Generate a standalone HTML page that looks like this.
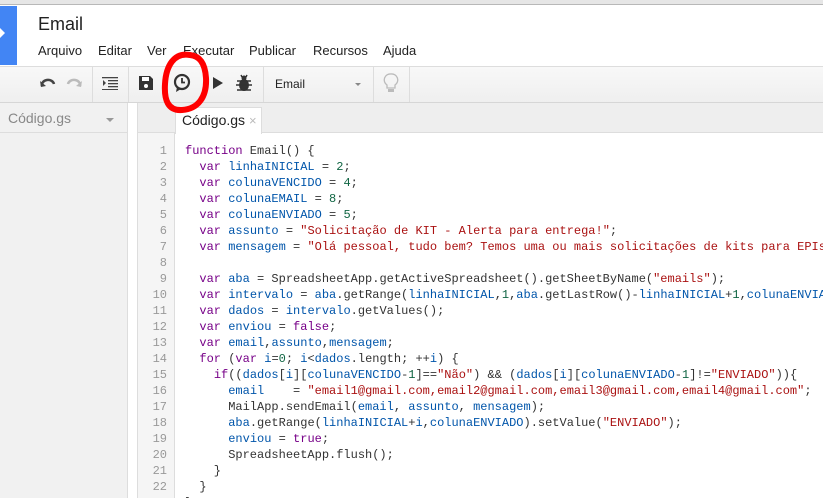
<!DOCTYPE html>
<html><head><meta charset="utf-8"><style>
*{margin:0;padding:0;box-sizing:border-box}
html,body{width:823px;height:498px;overflow:hidden}
body{background:#fff;font-family:"Liberation Sans",Arial,sans-serif;position:relative}
.a{position:absolute}
.code{font-family:"Liberation Mono",monospace;font-size:12px;line-height:16px;color:#333;white-space:pre}
.k{color:#708}.v{color:#05a}.n{color:#164}.s{color:#a11}
.ln{font-family:"Liberation Mono",monospace;font-size:12px;line-height:16px;color:#999;text-align:right;width:30px}
.sep{position:absolute;top:67px;width:1px;height:35px;background:#ddd}
.m{position:absolute;top:43px;font-size:13px;color:#222}
</style></head><body>
<div class="a" style="left:0;top:0;width:823px;height:5px;background:#e6e6e6;border-bottom:1px solid #b8b8b8"></div>
<div class="a" style="left:0;top:6px;width:17px;height:59px;background:#4285f4"></div>
<div class="a" style="left:0;top:28px;width:0;height:0;border-top:5px solid transparent;border-bottom:5px solid transparent;border-left:5px solid #fff"></div>
<div class="a" style="left:38px;top:14px;font-size:18px;color:#222">Email</div>
<div class="m" style="left:38px">Arquivo</div>
<div class="m" style="left:98px">Editar</div>
<div class="m" style="left:147px">Ver</div>
<div class="m" style="left:183px">Executar</div>
<div class="m" style="left:249px">Publicar</div>
<div class="m" style="left:313px">Recursos</div>
<div class="m" style="left:383px">Ajuda</div>
<!-- toolbar -->
<div class="a" style="left:0;top:66px;width:823px;height:37px;background:linear-gradient(#f8f8f8,#efefef);border-top:1px solid #ddd;border-bottom:1px solid #d6d6d6"></div>
<div class="sep" style="left:92px"></div><div class="sep" style="left:128px"></div><div class="sep" style="left:263px"></div><div class="sep" style="left:373px"></div><div class="sep" style="left:409px"></div>
<svg class="a" style="left:38px;top:74px" width="50" height="20" viewBox="0 0 50 20"><path d="M4 12 A6 5 0 0 1 16 10" fill="none" stroke="#444" stroke-width="2.5"/><path d="M2 7 L3 13 L8 12Z" fill="#444"/><path d="M42 12 A6 5 0 0 0 30 10" fill="none" stroke="#bbb" stroke-width="2.5"/><path d="M44 7 L43 13 L38 12Z" fill="#bbb"/></svg>
<svg class="a" style="left:102px;top:76px" width="16" height="14"><rect x="0" y="1" width="16" height="1.3" fill="#444"/><rect x="6" y="4" width="10" height="1.3" fill="#444"/><rect x="6" y="7" width="10" height="1.3" fill="#444"/><rect x="6" y="10" width="10" height="1.3" fill="#444"/><rect x="0" y="13" width="16" height="1" fill="#444"/><path d="M1 4 L4 7 L1 10Z" fill="#444"/></svg>
<svg class="a" style="left:138px;top:75px" width="16" height="16"><path d="M1 1 H12 L15 4 V15 H1Z" fill="#333"/><rect x="4" y="2" width="7" height="4" fill="#fff"/><circle cx="8" cy="11" r="2" fill="#fff"/></svg>
<svg class="a" style="left:172px;top:73px" width="20" height="20"><circle cx="10" cy="9" r="7" fill="none" stroke="#333" stroke-width="2.2"/><path d="M10 5 V9.5 H13" fill="none" stroke="#333" stroke-width="1.8"/><path d="M5 14 L4 19 L9 16Z" fill="#333"/></svg>
<svg class="a" style="left:212px;top:76px" width="12" height="14"><path d="M1 1 L11 7 L1 13Z" fill="#333"/></svg>
<svg class="a" style="left:235px;top:74px" width="18" height="18"><ellipse cx="9" cy="11" rx="5" ry="6" fill="#333"/><circle cx="9" cy="4" r="2.5" fill="#333"/><path d="M2 7 L16 7 M1 11 H17 M2 16 L16 16 M6 1 L7 3 M12 1 L11 3" stroke="#333" stroke-width="1.4"/></svg>
<div class="a" style="left:275px;top:77px;font-size:12px;color:#222">Email</div>
<div class="a" style="left:355px;top:83px;width:0;height:0;border-left:3px solid transparent;border-right:3px solid transparent;border-top:3px solid #888"></div>
<svg class="a" style="left:383px;top:73px" width="16" height="22"><path d="M8 1 A6 6 0 0 0 4 12 V15 H12 V12 A6 6 0 0 0 8 1Z" fill="none" stroke="#bbb" stroke-width="1.3"/><rect x="5" y="16" width="6" height="3" fill="#bbb"/></svg>
<!-- left panel -->
<div class="a" style="left:0;top:103px;width:128px;height:395px;background:#f1f1f1;border-right:1px solid #ddd"></div>
<div class="a" style="left:0;top:132px;width:128px;height:1px;background:#ddd"></div>
<div class="a" style="left:8px;top:110px;font-size:14px;color:#888">Código.gs</div>
<div class="a" style="left:106px;top:118px;width:0;height:0;border-left:4px solid transparent;border-right:4px solid transparent;border-top:4px solid #999"></div>
<!-- tab strip -->
<div class="a" style="left:137px;top:103px;width:686px;height:30px;background:#eee;border-bottom:1px solid #ddd;border-left:1px solid #ddd"></div>
<div class="a" style="left:175px;top:107px;width:87px;height:27px;background:#fff;border:1px solid #ddd;border-bottom:none"></div>
<div class="a" style="left:182px;top:112px;font-size:14px;color:#222">Código.gs <span style="color:#bbb;font-size:13px">×</span></div>
<!-- gutter -->
<div class="a" style="left:137px;top:133px;width:38px;height:365px;background:#f5f5f5;border-right:1px solid #ddd;border-left:1px solid #ddd"></div>
<div class="a ln" style="left:137px;top:143px">1<br>2<br>3<br>4<br>5<br>6<br>7<br>8<br>9<br>10<br>11<br>12<br>13<br>14<br>15<br>16<br>17<br>18<br>19<br>20<br>21<br>22</div>
<div class="a code" style="left:185px;top:143px"><span class="k">function</span> Email() {
  <span class="k">var</span> <span class="v">linhaINICIAL</span> = <span class="n">2</span>;
  <span class="k">var</span> <span class="v">colunaVENCIDO</span> = <span class="n">4</span>;
  <span class="k">var</span> <span class="v">colunaEMAIL</span> = <span class="n">8</span>;
  <span class="k">var</span> <span class="v">colunaENVIADO</span> = <span class="n">5</span>;
  <span class="k">var</span> <span class="v">assunto</span> = <span class="s">"Solicitação de KIT - Alerta para entrega!"</span>;
  <span class="k">var</span> <span class="v">mensagem</span> = <span class="s">"Olá pessoal, tudo bem? Temos uma ou mais solicitações de kits para EPIs</span>

  <span class="k">var</span> <span class="v">aba</span> = SpreadsheetApp.getActiveSpreadsheet().getSheetByName(<span class="s">"emails"</span>);
  <span class="k">var</span> <span class="v">intervalo</span> = <span class="v">aba</span>.getRange(<span class="v">linhaINICIAL</span>,<span class="n">1</span>,<span class="v">aba</span>.getLastRow()-<span class="v">linhaINICIAL</span>+<span class="n">1</span>,<span class="v">colunaENVIA</span>
  <span class="k">var</span> <span class="v">dados</span> = <span class="v">intervalo</span>.getValues();
  <span class="k">var</span> <span class="v">enviou</span> = <span class="k">false</span>;
  <span class="k">var</span> <span class="v">email</span>,<span class="v">assunto</span>,<span class="v">mensagem</span>;
  <span class="k">for</span> (<span class="k">var</span> <span class="v">i</span>=<span class="n">0</span>; <span class="v">i</span>&lt;<span class="v">dados</span>.length; ++<span class="v">i</span>) {
    <span class="k">if</span>((<span class="v">dados</span>[<span class="v">i</span>][<span class="v">colunaVENCIDO</span>-<span class="n">1</span>]==<span class="s">"Não"</span>) &amp;&amp; (<span class="v">dados</span>[<span class="v">i</span>][<span class="v">colunaENVIADO</span>-<span class="n">1</span>]!=<span class="s">"ENVIADO"</span>)){
      <span class="v">email</span>    = <span class="s">"email1@gmail.com,email2@gmail.com,email3@gmail.com,email4@gmail.com"</span>;
      MailApp.sendEmail(<span class="v">email</span>, <span class="v">assunto</span>, <span class="v">mensagem</span>);
      <span class="v">aba</span>.getRange(<span class="v">linhaINICIAL</span>+<span class="v">i</span>,<span class="v">colunaENVIADO</span>).setValue(<span class="s">"ENVIADO"</span>);
      <span class="v">enviou</span> = <span class="k">true</span>;
      SpreadsheetApp.flush();
    }
  }
}
</div>
<svg class="a" style="left:158px;top:50px;z-index:10" width="56" height="66"><path d="M32 5 C16 2 8 16 7 34 C6 50 10 61 24 60 C40 59 49 47 48 28 C47 12 41 6 32 5Z" fill="none" stroke="#f00" stroke-width="6"/></svg>
</body></html>
